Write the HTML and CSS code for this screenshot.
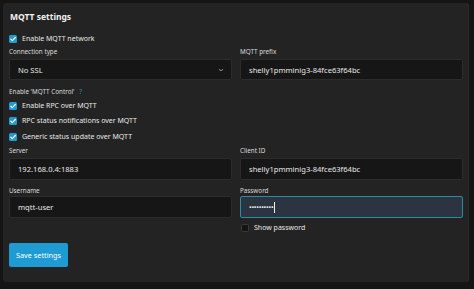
FILE: index.html
```html
<!DOCTYPE html>
<html>
<head>
<meta charset="utf-8">
<link rel="stylesheet" href="styles.css">
</head>
<body>
<div class="panel">
  <h2 class="title">MQTT settings</h2>
  <label class="check first"><span class="box on"><svg viewBox="0 0 10 10"><path d="M2.2 5.2 L4.2 7.1 L7.9 3.1" /></svg></span>Enable MQTT network</label>
  <div class="grid2 row-a">
    <div class="field">
      <div class="lbl">Connection type</div>
      <div class="input select">No SSL<svg class="chev" viewBox="0 0 10 6"><path d="M1.5 1.5 L5 4.5 L8.5 1.5" /></svg></div>
    </div>
    <div class="field">
      <div class="lbl">MQTT prefix</div>
      <div class="input">shelly1pmminig3-84fce63f64bc</div>
    </div>
  </div>
  <div class="control">
    <div class="lbl">Enable 'MQTT Control' <span class="q">?</span></div>
    <label class="check"><span class="box on"><svg viewBox="0 0 10 10"><path d="M2.2 5.2 L4.2 7.1 L7.9 3.1" /></svg></span>Enable RPC over MQTT</label>
    <label class="check"><span class="box on"><svg viewBox="0 0 10 10"><path d="M2.2 5.2 L4.2 7.1 L7.9 3.1" /></svg></span>RPC status notifications over MQTT</label>
    <label class="check"><span class="box on"><svg viewBox="0 0 10 10"><path d="M2.2 5.2 L4.2 7.1 L7.9 3.1" /></svg></span>Generic status update over MQTT</label>
  </div>
  <div class="grid2 row-b">
    <div class="field">
      <div class="lbl">Server</div>
      <div class="input tall">192.168.0.4:1883</div>
    </div>
    <div class="field">
      <div class="lbl">Client ID</div>
      <div class="input tall">shelly1pmminig3-84fce63f64bc</div>
    </div>
  </div>
  <div class="grid2 row-c">
    <div class="field">
      <div class="lbl">Username</div>
      <div class="input tall">mqtt-user</div>
    </div>
    <div class="field">
      <div class="lbl">Password</div>
      <div class="input tall focus"><span class="dots">••••••••••</span><span class="caret"></span></div>
      <label class="check show"><span class="box off"></span>Show password</label>
    </div>
  </div>
  <button class="save">Save settings</button>
</div>
</body>
</html>
```

FILE: styles.css
```css
* { box-sizing: border-box; }
html, body {
  margin: 0;
  padding: 0;
  background: #151515;
  width: 474px;
  height: 289px;
  overflow: hidden;
  font-family: "Noto Sans", "Open Sans", sans-serif;
  color: #e6e6e6;
}
body { padding: 3px 5px 0 3px; }
.panel {
  background: #232323;
  border-radius: 3px;
  height: 279px;
  padding: 7px 6px 0 6px;
  box-shadow: inset -1px 0 0 #2b2b2b;
}
.title {
  margin: 0 0 0 1px;
  font-size: 8.5px;
  line-height: 13px;
  font-weight: 700;
  color: #f2f2f2;
}
.check {
  display: flex;
  align-items: center;
  gap: 5px;
  height: 10px;
  font-size: 7px;
  line-height: 10px;
  color: #e8e8e8;
}
.check.first { margin-top: 11px; }
.box {
  width: 8px;
  height: 8px;
  border-radius: 1.5px;
  flex: none;
  display: flex;
}
.box.on { background: #1d9bd2; }
.box.off { background: #141414; border: 1px solid #3a3a3a; }
.box svg { width: 8px; height: 8px; }
.box svg path { fill: none; stroke: #ffffff; stroke-width: 1.5; stroke-linecap: round; stroke-linejoin: round; }
.grid2 {
  display: grid;
  grid-template-columns: 223px 223px;
  column-gap: 8px;
}
.row-a { margin-top: 3px; }
.lbl {
  font-size: 6.3px;
  line-height: 9px;
  color: #dcdcdc;
  margin-bottom: 3px;
}
.input {
  height: 21px;
  background: #161616;
  border: 1px solid #2c2c2c;
  border-radius: 2px;
  font-size: 7.6px;
  color: #e8e8e8;
  display: flex;
  align-items: center;
  padding-left: 8px;
  position: relative;
}
.input.tall { height: 22px; }
.select .chev {
  position: absolute;
  right: 7px;
  top: 8px;
  width: 6px;
  height: 4px;
}
.chev path { fill: none; stroke: #bdbdbd; stroke-width: 1.2; }
.control { margin-top: 7px; }
.control .lbl { margin-bottom: 4.5px; }
.control .check { margin-bottom: 5.8px; }
.q { color: #2f86c0; margin-left: 3px; }
.row-b { margin-top: -2px; }
.row-c { margin-top: 6px; }
.row-c .lbl { margin-bottom: 1.5px; }
.focus {
  background: #2b3440;
  border: 1px solid #2f8c9c;
}
.dots { font-size: 7px; letter-spacing: -0.2px; color: #f0f0f0; }
.caret { width: 1px; height: 11px; background: #f0f0f0; margin-left: 1px; }
.check.show { margin-top: 5px; }
.check.show .box { margin-left: 1px; }
.save {
  display: block;
  margin-top: 10px;
  width: 59px;
  height: 24px;
  background: #1d9bd2;
  border: none;
  border-radius: 2px;
  color: #ffffff;
  font-family: "Noto Sans", "Open Sans", sans-serif;
  font-size: 7.3px;
  padding: 0;
}
```
